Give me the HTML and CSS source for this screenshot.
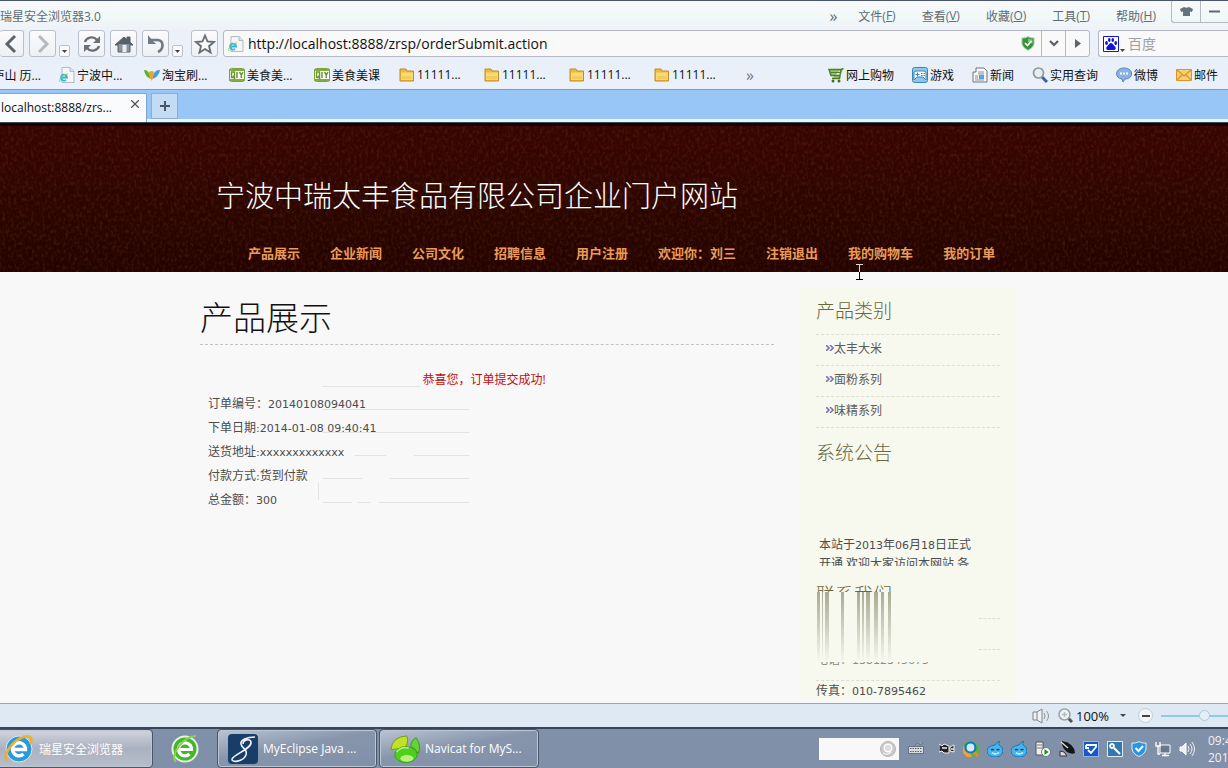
FILE: index.html
```html
<!DOCTYPE html>
<html lang="zh-CN">
<head>
  <meta charset="UTF-8">
  <meta name="viewport" content="width=device-width, initial-scale=1">
  <title>宁波中瑞太丰食品有限公司企业门户网站</title>
  <link rel="stylesheet" href="styles.css">
</head>
<body>
  <!-- Shared icons -->
  <svg class="defs" aria-hidden="true">
    <symbol id="folder" viewBox="0 0 16 16">
      <path d="M1 14V2h6l1 2h6.500v10z" fill="#f0b93a" stroke="#bf8a2c"/>
      <path d="M2 5.500h12V13H2z" fill="#fbd978"/>
      <path d="M3 9h10v3H3z" fill="#f5cc55"/>
    </symbol>
    <symbol id="page" viewBox="0 0 16 16">
      <path d="M3 .500h8l4 4v11H3z" fill="#f4f6f8" stroke="#b4bac0"/>
      <path d="M11 .500v4h4" fill="#dfe3e7" stroke="#b4bac0"/>
      <path d="M2 10.500h6a3 3 0 1 0-1 2.300" fill="none" stroke="#35b5d6" stroke-width="1.800"/>
      <path d="M1 15C0 12 3 7 9 7" fill="none" stroke="#8ccf70"/>
    </symbol>
    <symbol id="diy" viewBox="0 0 16 16">
      <rect x=".500" y="1.500" width="15" height="13" rx="2" fill="#fff" stroke="#7ba33b"/>
      <path d="M0 3h16M0 13h16" stroke="#83ab43" stroke-width="2"/>
      <path d="M2.500 5h3v5.500h-3zM4 9l2 3M8 5v6M10.500 5l1.800 3L14 5M12.300 8v3" fill="none" stroke="#6d9630" stroke-width="1.500"/>
    </symbol>
    <symbol id="bird" viewBox="0 0 16 16">
      <path d="M8 4q1-3 5-4-2 2-1 4 4 2 4 6-1 6-8 6-7 0-8-6 0-5 8-6z" fill="#48b4ee" stroke="#1976b8"/>
      <path d="M4 9q1.500-1 3 0M9.500 9q1.500-1 3 0" fill="none" stroke="#10436c" stroke-width="1.400"/>
      <path d="M5 11.500q3 3 7 0" fill="none" stroke="#c8efff" stroke-width="1.500"/>
    </symbol>
    <symbol id="arrows" viewBox="0 0 8 6">
      <path d="M0 0l3 3-3 3M4 0l3 3-3 3" fill="none" stroke="#7674b4" stroke-width="1.600"/>
    </symbol>
  </svg>

  <!-- Browser title bar -->
  <header class="titlebar">
    <span class="app-name">瑞星安全浏览器3.0</span>
    <nav class="menu">
      <button type="button">»</button>
      <button type="button">文件(<u>F</u>)</button>
      <button type="button">查看(<u>V</u>)</button>
      <button type="button">收藏(<u>O</u>)</button>
      <button type="button">工具(<u>T</u>)</button>
      <button type="button">帮助(<u>H</u>)</button>
    </nav>
    <div class="window-buttons">
      <button type="button" aria-label="皮肤"><svg width="13" height="11" viewBox="0 0 13 11"><path d="M4 1q2.500 1.500 5 0l4 2-1 3-2-.500V10H3V5.500L1 6 0 3z" fill="#66727c"/></svg></button>
      <button type="button" aria-label="最小化"><svg width="11" height="3" viewBox="0 0 11 3"><path d="M0 1.500h11" stroke="#5d6a75" stroke-width="2"/></svg></button>
    </div>
  </header>

  <!-- Toolbar -->
  <div class="toolbar">
    <button type="button" class="tool tool-back" aria-label="后退"><svg width="24" height="24" viewBox="0 0 24 24"><path d="M15 4l-8 8 8 8" fill="none" stroke="#5c636b" stroke-width="3"/></svg></button>
    <button type="button" class="tool" aria-label="前进"><svg width="24" height="24" viewBox="0 0 24 24"><path d="M8 4l8 8-8 8" fill="none" stroke="#b3b9bf" stroke-width="3"/></svg></button>
    <button type="button" class="drop" aria-label="历史"><svg width="5" height="3" viewBox="0 0 5 3"><path d="M0 0h5L2.500 3z" fill="#444"/></svg></button>
    <button type="button" class="tool" aria-label="刷新"><svg width="24" height="24" viewBox="0 0 24 24"><path d="M5 10c1-4 8-7 12-2M19 14c-1 4-8 7-12 2" fill="none" stroke="#687079" stroke-width="2.400"/><path d="M20 4v7h-7zM4 20v-7h7z" fill="#687079"/></svg></button>
    <button type="button" class="tool" aria-label="主页"><svg width="24" height="24" viewBox="0 0 24 24"><path d="M3 13l9-8 3 2.500V5h3v5l3 3z" fill="#566069" stroke="#566069"/><path d="M6 12v8h12v-8" fill="#8b95a0" stroke="#566069"/><path d="M10.500 13h4v7h-4z" fill="#e9edf2"/></svg></button>
    <button type="button" class="tool" aria-label="撤销"><svg width="24" height="24" viewBox="0 0 24 24"><path d="M6 8h8c6 1 6 9 0 12" fill="none" stroke="#727a82" stroke-width="2.600"/><path d="M4 3v9h8L8 8z" fill="#727a82"/></svg></button>
    <button type="button" class="drop" aria-label="最近关闭"><svg width="5" height="3" viewBox="0 0 5 3"><path d="M0 0h5L2.500 3z" fill="#444"/></svg></button>
    <button type="button" class="tool" aria-label="收藏"><svg width="24" height="24" viewBox="0 0 24 24"><path d="M12 3.500l2.500 6 6.500.500-5 4.200 1.600 6.300L12 17l-5.600 3.500L8 14.200 3 10l6.500-.500z" fill="#fafafa" stroke="#636b73" stroke-width="1.800"/></svg></button>
    <form class="address">
      <svg width="16" height="16"><use href="#page"/></svg>
      <input type="text" aria-label="地址" value="http://localhost:8888/zrsp/orderSubmit.action">
      <svg width="14" height="15" viewBox="0 0 14 15"><path d="M7 .700q3 1.800 6 1.300v6q-1 4-6 6.300Q2 12 1 8V2q3 .500 6-1.300z" fill="#35943a" stroke="#a8c8a8"/><path d="M7 2.500q2 1 4.500 1v4L7 6z" fill="#7fc574"/><path d="M4 7l2.500 2.500L10.500 5" fill="none" stroke="#fff" stroke-width="1.600"/></svg>
      <button type="button" aria-label="地址列表"><svg width="10" height="7" viewBox="0 0 10 7"><path d="M1 1l4 4 4-4" fill="none" stroke="#555e67" stroke-width="2.200"/></svg></button>
      <button type="button" aria-label="转到"><svg width="6" height="9" viewBox="0 0 6 9"><path d="M0 0l6 4.500L0 9z" fill="#5c646c"/></svg></button>
    </form>
    <form class="search">
      <svg width="22" height="16" viewBox="0 0 22 16">
        <path d="M.500.500h15v15H.500z" fill="#fff" stroke="#1414c8"/>
        <g fill="#1414d8"><ellipse cx="3.500" cy="7" rx="1.400" ry="2"/><ellipse cx="6.300" cy="4" rx="1.300" ry="2"/><ellipse cx="9.800" cy="4" rx="1.300" ry="2"/><ellipse cx="12.700" cy="7" rx="1.400" ry="2"/><path d="M8 7c2 0 2.500 2.500 4 3.500 1.500 1.500.500 3.500-1 3.500H5c-1.500 0-2.500-2-1-3.500C5.500 9.500 6 7 8 7z"/></g>
        <path d="M17 13h5l-2.500 3z" fill="#444"/>
      </svg>
      <input type="text" aria-label="搜索" placeholder="百度">
    </form>
  </div>

  <!-- Bookmarks -->
  <nav class="bookmarks">
    <div class="bookmarks-left">
      <a href="#" class="cut">庐山 历...</a>
      <a href="#"><svg width="16" height="16"><use href="#page"/></svg>宁波中...</a>
      <a href="#"><svg width="16" height="16" viewBox="0 0 16 16"><path d="M0 3q5-1 7 9-6-2-7-9z" fill="#5cb531"/><path d="M16 3q-6-1-8 9 7-2 8-9z" fill="#3fa1dc"/><path d="M5 5q3-2 5 0l-2 9q-3-3-3-9z" fill="#f5a31f"/></svg>淘宝刷...</a>
      <a href="#"><svg width="16" height="16"><use href="#diy"/></svg>美食美...</a>
      <a href="#"><svg width="16" height="16"><use href="#diy"/></svg>美食美课</a>
      <a href="#"><svg width="16" height="16"><use href="#folder"/></svg>11111...</a>
      <a href="#"><svg width="16" height="16"><use href="#folder"/></svg>11111...</a>
      <a href="#"><svg width="16" height="16"><use href="#folder"/></svg>11111...</a>
      <a href="#"><svg width="16" height="16"><use href="#folder"/></svg>11111...</a>
      <button type="button" class="more">»</button>
    </div>
    <div class="bookmarks-right">
      <a href="#"><svg width="16" height="16" viewBox="0 0 16 16"><path d="M15.500 1.500L13 2.500H1l2 6h9M13 2.500l-1.500 9H4" fill="#9cc26a" stroke="#4d7f2a" stroke-width="1.500"/><path d="M3 5.500h9" stroke="#4d7f2a"/><circle cx="5" cy="14" r="1.500" fill="#4a6a2c"/><circle cx="11" cy="14" r="1.500" fill="#4a6a2c"/></svg>网上购物</a>
      <a href="#"><svg width="16" height="16" viewBox="0 0 16 16"><rect x=".500" y=".500" width="15" height="15" rx="2" fill="#8cc8ea" stroke="#3d86b4"/><path d="M2 13V5l2-1h8l2 1v8l-3-3H5z" fill="#fff" stroke="#3d86b4"/><path d="M3.500 7.500h4M5.500 5.500v4M9 6.500h1.500M11.500 6.500H13M9 8.500h1.500M11.500 8.500H13" stroke="#3d86b4"/></svg>游戏</a>
      <a href="#"><svg width="16" height="16" viewBox="0 0 16 16"><path d="M1 15V5h3V1h8l3 3v11z" fill="#f8f8f8" stroke="#6d757d"/><path d="M6 5h6M6 7h6M3 9h3M3 11h3M3 13h9" stroke="#8a9298"/><path d="M7 8h5v4H7z" fill="#53a6dc"/></svg>新闻</a>
      <a href="#"><svg width="16" height="16" viewBox="0 0 16 16"><path d="M10 10l5 5" stroke="#3b62a6" stroke-width="3"/><circle cx="6.500" cy="6" r="5" fill="#e6eef4" stroke="#8f979f" stroke-width="1.700"/></svg>实用查询</a>
      <a href="#"><svg width="16" height="16" viewBox="0 0 16 16"><path d="M8 1c10 0 10 11 1 11l-2 3-1-3C-2 11-1 1 8 1z" fill="#8cb2e4" stroke="#5c82b8"/><path d="M4 6.500h2M7 6.500h2M10 6.500h2" stroke="#fff" stroke-width="2"/></svg>微博</a>
      <a href="#"><svg width="16" height="16" viewBox="0 0 16 16"><path d="M.500 2.500h15v11H.500z" fill="#fbd071" stroke="#d9942b"/><path d="M1 3l7 6 7-6M1 13l5-5M15 13l-5-5" fill="none" stroke="#d9942b" stroke-width="1.300"/></svg>邮件</a>
    </div>
  </nav>

  <!-- Tabs -->
  <div class="tabs">
    <div class="tab">
      <span>localhost:8888/zrs...</span>
      <button type="button" aria-label="关闭"><svg width="8" height="8" viewBox="0 0 8 8"><path d="M0 0l8 8M8 0L0 8" stroke="#555" stroke-width="1.300"/></svg></button>
    </div>
    <button type="button" class="new-tab" aria-label="新标签"><svg width="10" height="10" viewBox="0 0 10 10"><path d="M0 5h10M5 0v10" stroke="#475664" stroke-width="2"/></svg></button>
  </div>

  <!-- Web page -->
  <div class="viewport">
    <div class="banner">
      <svg class="grain" aria-hidden="true">
        <filter id="noise" x="0" y="0" width="100%" height="100%">
          <feTurbulence type="fractalNoise" baseFrequency="0.35 0.25" numOctaves="2" seed="4"/>
          <feColorMatrix values="0 0 0 0 .35  0 0 0 0 .1  0 0 0 0 .04  2.4 0 0 0 -1.05"/>
        </filter>
        <rect width="100%" height="100%" filter="url(#noise)"/>
      </svg>
      <div class="container">
        <div class="site-name">宁波中瑞太丰食品有限公司企业门户网站</div>
        <nav class="site-nav">
          <a href="#">产品展示</a>
          <a href="#">企业新闻</a>
          <a href="#">公司文化</a>
          <a href="#">招聘信息</a>
          <a href="#">用户注册</a>
          <a href="#">欢迎你：刘三</a>
          <a href="#">注销退出</a>
          <a href="#">我的购物车</a>
          <a href="#">我的订单</a>
        </nav>
      </div>
    </div>

    <div class="container columns">
      <main class="content">
        <h1>产品展示</h1>
        <div class="order">
          <svg class="rules" width="160" height="128" viewBox="0 0 160 128" aria-hidden="true">
            <path d="M4 6.500h98M4 29.500h148M4 52.500h148M36 75.500h32M96 75.500h56M4 98.500h40M72 98.500h80M4 122.500h30M40 122.500h12M60 122.500h92M.500 102v18" stroke="#e3e4e5" fill="none"/>
          </svg>
          <p class="success">恭喜您，订单提交成功!</p>
          <p>订单编号：<span class="num">20140108094041</span></p>
          <p>下单日期<span class="num">:2014-01-08 09:40:41</span></p>
          <p>送货地址<span class="num">:xxxxxxxxxxxxx</span></p>
          <p>付款方式<span class="num">:</span>货到付款</p>
          <p>总金额：<span class="num">300</span></p>
        </div>
      </main>

      <aside class="sidebar">
        <h2>产品类别</h2>
        <ul>
          <li><a href="#"><svg width="8" height="6"><use href="#arrows"/></svg>太丰大米</a></li>
          <li><a href="#"><svg width="8" height="6"><use href="#arrows"/></svg>面粉系列</a></li>
          <li><a href="#"><svg width="8" height="6"><use href="#arrows"/></svg>味精系列</a></li>
        </ul>
        <h2>系统公告</h2>
        <div class="notice">本站于<span class="num">2013</span>年<span class="num">06</span>月<span class="num">18</span>日正式<br>开通,欢迎大家访问本网站,各</div>
        <h2 class="contact-title">联系我们</h2>
        <div class="trail">
          <svg width="78" height="70" viewBox="0 0 78 70" aria-hidden="true">
            <linearGradient id="fade" x1="0" y1="0" x2="0" y2="1"><stop offset="0" stop-color="#a9ab94"/><stop offset=".500" stop-color="#cdcfbf"/><stop offset="1" stop-color="#f7f8ee"/></linearGradient>
            <path d="M1 0h3v70H1zM6 0h1v70H6zM9 0h4v70H9zM25 0h3v70h-3zM41 0h3v70h-3zM46 0h2v70h-2zM50 0h4v70h-4zM58 0h4v70h-4zM65 0h3v70h-3zM72 0h3v70h-3z" fill="url(#fade)"/>
          </svg>
          <div class="dashes"><i></i><i></i></div>
        </div>
        <div class="phone"><span>电话：<span class="num">13812345675</span></span></div>
        <div class="fax">传真：<span class="num">010-7895462</span></div>
      </aside>
    </div>
  </div>

  <!-- Status bar -->
  <div class="statusbar">
    <svg width="18" height="16" viewBox="0 0 18 16"><path d="M1 4h4l5-3v14l-5-3H1zM5 4v8" fill="#eef1f4" stroke="#7d858d"/><path d="M12 5q2 3 0 6M14.500 3q4 5 0 10" fill="none" stroke="#8b939b"/></svg>
    <svg class="zoom-icon" width="16" height="16" viewBox="0 0 16 16"><path d="M10 10l4 4" stroke="#555" stroke-width="3"/><circle cx="6.500" cy="6.500" r="5.500" fill="#eef2f5" stroke="#9aa2a9" stroke-width="1.500"/><path d="M4 6.500h5M6.500 4v5" stroke="#b5bdc4" stroke-width="1.500"/></svg>
    <span class="percent">100%</span>
    <button type="button" aria-label="缩放比例"><svg width="6" height="3" viewBox="0 0 6 3"><path d="M0 0h6L3 3z" fill="#444"/></svg></button>
    <button type="button" class="minus" aria-label="缩小"><svg width="8" height="2" viewBox="0 0 8 2"><path d="M0 1h8" stroke="#444" stroke-width="2"/></svg></button>
    <input type="range" min="0" max="100" value="67" aria-label="缩放">
  </div>

  <!-- Windows taskbar -->
  <footer class="taskbar">
    <button type="button" class="task task-active">
      <svg width="30" height="30" viewBox="0 0 30 30"><circle cx="15" cy="15" r="13" fill="#289cda" stroke="#d4edf8"/><path d="M8.500 15.500h13a6.500 6.500 0 1 0-2 4.500" fill="none" stroke="#fff" stroke-width="3.400"/><path d="M3 27C-3 20 14-1 26 3q3 2 0 7" fill="none" stroke="#f2ae2a" stroke-width="2.600"/></svg>
      瑞星安全浏览器
    </button>
    <button type="button" class="pinned" aria-label="浏览器">
      <svg width="28" height="28" viewBox="0 0 28 28"><circle cx="14" cy="14" r="12.500" fill="#47b52b" stroke="#e2f5dc" stroke-width="2"/><path d="M8 14.500h12.500a6.500 6.500 0 1 0-2 4.500" fill="none" stroke="#fff" stroke-width="3.200"/><path d="M5 27C-2 20 13 1 25 1" fill="none" stroke="#83d34f" stroke-width="2"/></svg>
    </button>
    <button type="button" class="task">
      <svg width="30" height="30" viewBox="0 0 30 30"><rect width="30" height="30" rx="4" fill="#173d68"/><path d="M27 3C19 3 12 6 13 10c1 5 7 5 5 11-3 7-15 8-14 4 2-5 20-10 19-17-1-4-8-2-8 2" fill="none" stroke="#f0f4f8" stroke-width="1.600"/></svg>
      MyEclipse Java ...
    </button>
    <button type="button" class="task">
      <svg width="30" height="30" viewBox="0 0 32 30"><path d="M1 16Q2 2 18 1q3 10-5 14-6-1-12 1z" fill="#c4df27" stroke="#6d9c16"/><path d="M22 12q1-7 6-9 6 9 2 17-3-6-8-8z" fill="#67d137" stroke="#3c9a1d"/><ellipse cx="17" cy="21" rx="12" ry="8.500" fill="#4fce1d" stroke="#33a012"/><ellipse cx="18" cy="25" rx="7" ry="3.500" fill="#b8f27c"/><path d="M7 18q5-6 13-4" fill="none" stroke="#a7ee73" stroke-width="2"/></svg>
      Navicat for MyS...
    </button>
    <div class="tray">
      <form class="tray-search">
        <input type="text" aria-label="桌面搜索">
        <svg width="16" height="16" viewBox="0 0 16 16"><circle cx="8" cy="8" r="7.500" fill="#c9c9c9" stroke="#b4b4b4"/><circle cx="8" cy="7" r="3.800" fill="#ddd" stroke="#fff" stroke-width="1.500"/><path d="M3 12q4 3 8-1" fill="none" stroke="#fff"/></svg>
      </form>
      <svg class="keyboard" width="16" height="16" viewBox="0 0 16 16"><path d="M.500 5.500h15v7H.500zM8 5V3h6V1" fill="#d8dcdf" stroke="#64707d"/><path d="M2 7.500h12M2 10.500h12" stroke="#53606c" stroke-dasharray="1.500 1"/></svg>
      <svg width="16" height="16" viewBox="0 0 16 16"><path d="M0 3l3 2 2-2 5 2v7H5l-2-2-3 1zM11 6l4-2v7l-4-1z" fill="#222" stroke="#eee"/><path d="M3 7h5M12 8h3" stroke="#eee" stroke-width="1.500"/></svg>
      <svg width="16" height="16" viewBox="0 0 16 16"><path d="M3 0h8l5 5v8l-4 3-9-1-3-5V3z" fill="#57b544"/><path d="M0 5v7l4 4h5l-3-7z" fill="#f0a22e"/><path d="M10 10l5 5" stroke="#e98b22" stroke-width="3"/><circle cx="7.500" cy="6.500" r="5" fill="#c9ecff" stroke="#1673c8" stroke-width="2.200"/></svg>
      <svg width="16" height="16"><use href="#bird"/></svg>
      <svg width="16" height="16"><use href="#bird"/></svg>
      <svg width="16" height="16" viewBox="0 0 16 16"><path d="M1 1h7v13H1z" fill="#eee" stroke="#555"/><path d="M2 4h5M2 7h5" stroke="#777"/><circle cx="11" cy="11" r="4.500" fill="#fff" stroke="#6a7a6a"/><path d="M9.500 8l4 3-4 3z" fill="#198c19"/></svg>
      <svg width="16" height="16" viewBox="0 0 16 16"><path d="M1 10l4 1 3 4H1z" fill="#ddd" stroke="#333"/><path d="M3 0q12 2 13 12-3 2-8-1-6-5-5-11z" fill="#151515"/><path d="M2 1l7 6" stroke="#ddd" stroke-width="1.500"/></svg>
      <svg width="16" height="16" viewBox="0 0 16 16"><path d="M.500.500h15v15H.500z" fill="#1957c4" stroke="#8bb8f0"/><path d="M3 4h10v2L8 12 5 9M3 4v3h3" fill="none" stroke="#fff" stroke-width="1.800"/></svg>
      <svg width="16" height="16" viewBox="0 0 16 16"><path d="M.500.500h15v15H.500z" fill="#3478ae" stroke="#e3edf5"/><circle cx="5" cy="5" r="2" fill="none" stroke="#fff" stroke-width="1.800"/><path d="M7 7l6 6" stroke="#fff" stroke-width="2.200"/></svg>
      <svg width="16" height="16" viewBox="0 0 16 16"><path d="M8 .700q4 2 7 1.300v6q-1 5-7 7.500Q2 13 1 8V2q3 .700 7-1.300z" fill="#2b94e2" stroke="#d7efff"/><path d="M4.500 7l3 3 4.500-5" fill="none" stroke="#fff" stroke-width="2"/></svg>
      <svg width="16" height="16" viewBox="0 0 16 16"><path d="M5 4h10v8H5z" fill="#68798e" stroke="#fff"/><path d="M7 14.500h7M10 12v2M1 1v4h4V1M3 5v8h2" fill="none" stroke="#fff" stroke-width="1.300"/></svg>
      <svg width="16" height="16" viewBox="0 0 16 16"><path d="M1 6h2l4-4v12l-4-4H1z" fill="#eee" stroke="#fff"/><path d="M9 5q2 3 0 6M11 3q4 5 0 10M13 1q5 7 0 14" fill="none" stroke="#edf1f5"/></svg>
      <div class="clock">09:40<br>2014</div>
    </div>
  </footer>

  <!-- Text cursor -->
  <svg class="cursor" width="7" height="16" viewBox="0 0 7 16" aria-hidden="true"><path d="M0 .500h7M3.500 0v8" stroke="#ddd"/><path d="M3.500 8v8M0 15.500h7" stroke="#000"/></svg>
</body>
</html>
```
FILE: styles.css
```css
* {
  box-sizing: border-box;
}
body {
  margin: 0;
  height: 100vh;
  display: flex;
  flex-direction: column;
  overflow: hidden;
  background-color: #f8f8f8;
  font-family: "Open Sans", "Noto Sans CJK SC", sans-serif;
  font-size: 12px;
  color: #111;
}
button, input {
  font-family: inherit;
  font-size: inherit;
  color: inherit;
  border: none;
  padding: 0;
  margin: 0;
  background: none;
}
button {
  display: flex;
  align-items: center;
  justify-content: center;
}
a {
  color: inherit;
  text-decoration: none;
}
svg {
  flex-shrink: 0;
}
.defs {
  position: absolute;
  width: 0;
  height: 0;
}

/* Browser chrome */
.titlebar {
  flex-shrink: 0;
  height: 30px;
  display: flex;
  align-items: center;
  border-top: 1px solid #4a566b;
  background: linear-gradient(#f8f9fb, #f0f8f8 60%, #eef1f7);
  color: #626b72;
}
.app-name {
  flex: 1;
}
.menu {
  display: flex;
  gap: 26px;
  margin-right: 15px;
}
.menu button:first-child {
  font-size: 16px;
  margin-right: -5px;
}
.window-buttons {
  display: flex;
  align-self: flex-start;
  height: 22px;
  border: 1px solid #b3bac4;
  border-top: none;
  border-right: none;
  border-radius: 0 0 0 3px;
}
.window-buttons button {
  width: 28px;
}
.window-buttons button + button {
  border-left: 1px solid #b3bac4;
}
.toolbar {
  flex-shrink: 0;
  height: 27px;
  display: flex;
  align-items: flex-end;
  background-color: #ecf0f9;
}
.tool {
  width: 27px;
  height: 27px;
  margin-right: 5px;
  border: 1px solid #b9bfcb;
  border-radius: 3px;
  background: linear-gradient(#fbfbfd, #eef0f5);
}
.tool:has(+ .drop) {
  margin-right: 3px;
}
.tool-back {
  width: 24px;
  border-left: none;
}
.drop {
  width: 11px;
  height: 12px;
  margin-right: 8px;
  border: 1px solid #b9bfcb;
  border-radius: 2px;
  background-color: #fafafc;
}
.address, .search {
  display: flex;
  align-items: center;
  height: 27px;
  border: 1px solid #b3b8c3;
  border-radius: 3px;
  background-color: #f9f9fa;
}
.address {
  flex: 1;
  padding-left: 4px;
}
.address input {
  flex: 1;
  min-width: 0;
  margin: 0 4px;
  font-size: 14px;
}
.address button {
  width: 24px;
  height: 25px;
  border-left: 1px solid #b3b8c3;
}
.address svg + button {
  margin-left: 6px;
}
.search {
  width: 130px;
  margin-left: 8px;
  padding-left: 4px;
  border-right: none;
  border-radius: 3px 0 0 3px;
}
.search input {
  width: 90px;
  margin-left: 3px;
  font-size: 14px;
}
.search input::placeholder {
  color: #a0a0a0;
}
.bookmarks {
  flex-shrink: 0;
  height: 33px;
  display: flex;
  justify-content: space-between;
  padding: 3px 10px 0 0;
  border-bottom: 1px solid #829ab8;
  background: linear-gradient(#e8eff8, #eaf1fa);
}
.bookmarks a {
  display: flex;
  align-items: center;
  gap: 2px;
  white-space: nowrap;
}
.bookmarks-left {
  display: flex;
}
.bookmarks-left a {
  width: 85px;
}
.bookmarks-left .cut {
  width: 59px;
  padding-right: 18px;
  justify-content: flex-end;
}
.more {
  margin-left: 7px;
  font-size: 16px;
  color: #6e7684;
}
.bookmarks-right {
  display: flex;
  gap: 18px;
}
.tabs {
  flex-shrink: 0;
  height: 33px;
  display: flex;
  gap: 4px;
  padding: 3px 0 3px;
  border-bottom: 1px solid #3c4858;
  background: linear-gradient(#98c7f7 29px, #e8f6ff 29px);
}
.tab {
  width: 147px;
  height: 29px;
  display: flex;
  align-items: center;
  justify-content: flex-end;
  overflow: hidden;
  padding: 0 7px 2px 0;
  border: 1px solid #7da8d6;
  border-left: none;
  border-bottom: none;
  background-color: #f9fbfd;
}
.tab button {
  margin: 0 0 6px 19px;
}
.new-tab {
  width: 27px;
  border: 1px solid #8badcf;
  background-color: #c3dcf3;
}

/* Web page */
.viewport {
  flex: 1;
  min-height: 0;
  overflow: hidden;
  background-color: #f8f8f8;
  color: #4c4c4c;
}
.container {
  max-width: 828px;
  margin: 0 auto;
}
.banner {
  position: relative;
  height: 149px;
  border-top: 3px solid #170307;
  background: linear-gradient(#380500, #2d0600 50%, #240300);
}
.grain {
  position: absolute;
  top: 0;
  left: 0;
  width: 100%;
  height: 100%;
  opacity: 0.2;
}
.banner .container {
  position: relative;
}
.site-name {
  padding: 52px 0 0 16px;
  font-size: 29px;
  line-height: 36px;
  font-weight: 300;
  color: #fff;
}
.site-nav {
  display: flex;
  gap: 30px;
  padding: 29px 0 0 48px;
  font-size: 13px;
  line-height: 20px;
  font-weight: bold;
  color: #eb9b57;
  white-space: nowrap;
}
.columns {
  display: flex;
  justify-content: space-between;
  padding-right: 13px;
}
.content {
  width: 574px;
  padding-top: 29px;
}
h1, h2, p, ul {
  margin: 0;
  padding: 0;
}
h1 {
  padding-bottom: 9px;
  border-bottom: 1px dashed #c4c4c4;
  font-size: 33px;
  line-height: 34px;
  font-weight: 300;
  color: #111;
}
.order {
  position: relative;
  margin-top: 23px;
  padding: 0 14px 0 8px;
  line-height: 24px;
}
.order p {
  position: relative;
  height: 24px;
}
.rules {
  position: absolute;
  top: 12px;
  left: 118px;
}
.success {
  text-align: center;
  color: #c00d0d;
}
.num {
  font-family: "DejaVu Sans", sans-serif;
  font-size: 11px;
}
.sidebar {
  width: 215px;
  margin-top: 15px;
  padding: 14px 15px 0 16px;
  background-color: #f7f8ee;
}
.sidebar h2 {
  font-size: 19px;
  line-height: 20px;
  font-weight: 300;
  color: #68683c;
}
.sidebar ul {
  margin: 13px 0 15px;
  border-top: 1px dashed #dcdfd3;
  list-style: none;
}
.sidebar li {
  height: 31px;
  padding-left: 10px;
  border-bottom: 1px dashed #dcdfd3;
}
.sidebar li a {
  display: flex;
  align-items: center;
  height: 26px;
  color: #5c5c5c;
}
.notice {
  height: 103px;
  padding: 73px 0 0 3px;
  line-height: 18px;
  overflow: hidden;
  white-space: nowrap;
}
.sidebar .contact-title {
  height: 7px;
  margin-top: 19px;
  overflow: hidden;
}
.trail {
  display: flex;
  justify-content: space-between;
  height: 70px;
}
.dashes {
  width: 21px;
  padding-top: 26px;
}
.dashes i {
  display: block;
  height: 31px;
  border-top: 1px dashed #dcdfd3;
}
.phone {
  display: flex;
  align-items: flex-end;
  height: 4px;
  line-height: 11px;
  overflow: hidden;
  color: #8c8c84;
}
.fax {
  margin-top: 14px;
  height: 20px;
  border-top: 1px dashed #dcdfd3;
  line-height: 19px;
}

/* Status bar */
.statusbar {
  flex-shrink: 0;
  height: 24px;
  display: flex;
  align-items: center;
  justify-content: flex-end;
  border-top: 1px solid #86a8c6;
  background-color: #dfe9f3;
}
.zoom-icon {
  margin: 0 2px 0 8px;
}
.percent {
  width: 44px;
  font-size: 13px;
}
.minus {
  width: 15px;
  height: 15px;
  margin: 0 8px 0 12px;
  border: 1px solid #c3ccd5;
  border-radius: 50%;
  background-color: #f2f5f8;
}
input[type="range"] {
  width: 67px;
  height: 12px;
  appearance: none;
}
input[type="range"]::-webkit-slider-runnable-track {
  height: 2px;
  background-color: #8accea;
}
input[type="range"]::-webkit-slider-thumb {
  appearance: none;
  width: 11px;
  height: 11px;
  margin-top: -5px;
  border: 1px solid #b5c6d5;
  border-radius: 50%;
  background-color: #e7eff6;
}

/* Taskbar */
.taskbar {
  flex-shrink: 0;
  height: 41px;
  display: flex;
  padding-top: 1px;
  border-top: 2px solid #36455a;
  background-color: #8190a9;
}
.task {
  width: 158px;
  height: 37px;
  justify-content: flex-start;
  gap: 5px;
  padding-left: 9px;
  margin-right: 4px;
  border: 1px solid #bcc6d4;
  border-radius: 3px;
  outline: 1px solid #49566a;
  background: linear-gradient(170deg, #b9c2d0, #8795ac 45%, #8190a9);
  color: #fff;
  white-space: nowrap;
}
.task-active {
  width: 152px;
  padding-left: 4px;
  margin-right: 0;
  border-left: none;
  border-radius: 0 3px 3px 0;
  background: linear-gradient(#ced2db, #aab2c1 50%, #b7bdc9);
}
.pinned {
  width: 66px;
}
.tray {
  margin-left: auto;
  display: flex;
  align-items: center;
  gap: 8px;
  overflow: hidden;
}
.tray-search {
  display: flex;
  align-items: center;
  width: 80px;
  height: 22px;
  margin-right: 1px;
  padding-right: 3px;
  background-color: #f8f8f8;
}
.tray-search input {
  width: 61px;
}
.keyboard {
  margin-right: 7px;
}
.clock {
  width: 25px;
  padding-left: 5px;
  line-height: 17px;
  color: #f0f3f7;
}

/* Mouse cursor lies over the page */
.cursor {
  position: absolute;
  left: 856px;
  top: 264px;
}
```
